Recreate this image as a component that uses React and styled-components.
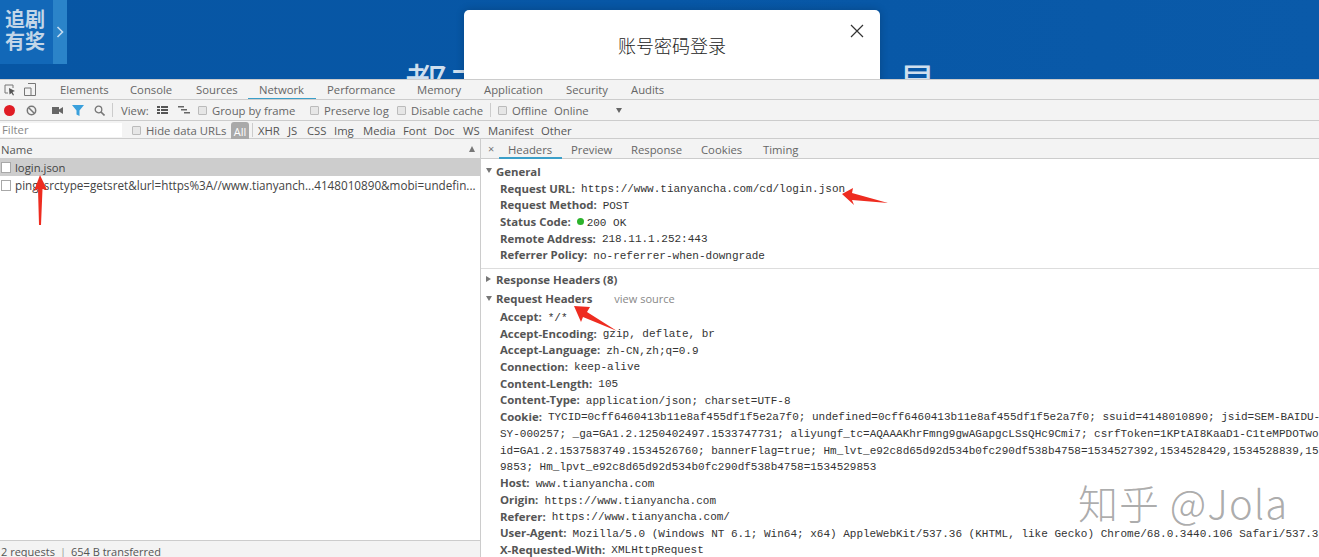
import React from "react";
import styled, { createGlobalStyle } from "styled-components";

const GlobalStyle = createGlobalStyle`
  html, body { margin: 0; padding: 0; overflow: hidden; background: #fff; }
  body { font-family: "Open Sans", "Liberation Sans", "Noto Sans CJK SC", sans-serif; }
  * { box-sizing: border-box; }
`;

const Page = styled.div`
  position: relative;
  width: 1319px;
  height: 557px;
  overflow: hidden;
  display: flex;
  flex-direction: column;
`;

const Hero = styled.div`
  position: relative;
  height: 79px;
  flex: none;
  overflow: hidden;
  background: linear-gradient(90deg, #0756a4, #0757a6 50%, #0a5aa9);
`;

const PromoTab = styled.div`
  position: absolute;
  left: 0;
  top: 0;
  width: 67px;
  height: 64px;
  display: flex;
  background: #1268b8;
`;

const PromoText = styled.div`
  width: 53px;
  padding: 8px 0 0 5px;
  font-family: "Noto Sans CJK SC", sans-serif;
  font-size: 20px;
  font-weight: 700;
  line-height: 22px;
  color: #c3d6e8;
`;

const PromoArrow = styled.div`
  flex: 1;
  display: flex;
  align-items: center;
  justify-content: center;
  background: #2b84c9;
`;

const HeroTitle = styled.div`
  position: absolute;
  left: 405px;
  top: 55px;
  width: 537px;
  display: flex;
  justify-content: space-between;
  font-family: "Noto Sans CJK SC", sans-serif;
  font-size: 42px;
  line-height: 52px;
  letter-spacing: 4px;
  color: #cfdfee;
`;

const Modal = styled.div`
  position: absolute;
  left: 464px;
  top: 10px;
  width: 416px;
  height: 90px;
  padding-top: 22px;
  background: #fff;
  border-radius: 5px;
  box-shadow: 0 0 8px rgba(0, 0, 0, 0.2);
  text-align: center;
  font-family: "Noto Sans CJK SC", sans-serif;
  font-size: 18px;
  font-weight: 300;
  line-height: 26px;
  color: #222;
`;

const CloseIcon = styled.svg`
  position: absolute;
  right: 15px;
  top: 13px;
`;

const Devtools = styled.div`
  flex: 1;
  min-height: 0;
  display: flex;
  flex-direction: column;
  font-size: 11.3px;
  color: #5a5a5a;
`;

const TabBar = styled.div`
  height: 21px;
  flex: none;
  display: flex;
  align-items: stretch;
  background: #f3f3f3;
  border-top: 1px solid #ccc;
  border-bottom: 1px solid #ccc;
`;

const IconSlot = styled.div`
  width: 49px;
  padding-left: 4px;
  display: flex;
  align-items: center;
  gap: 8px;
`;

const MainTab = styled.div`
  width: ${(p) => p.$w}px;
  padding-left: 11px;
  line-height: 20px;
  white-space: nowrap;
  color: #666;
  border-bottom: ${(p) => (p.$active ? "1px solid #3b9fc9" : "none")};
`;

const Toolbar = styled.div`
  height: 21px;
  flex: none;
  display: flex;
  align-items: center;
  background: #f3f3f3;
  border-bottom: 1px solid #ccc;
  white-space: nowrap;
`;

const FilterBar = styled(Toolbar)`
  height: 18px;
  padding-top: 1px;
`;

const Separator = styled.div`
  width: 1px;
  height: 14px;
  margin: ${(p) => p.$margin};
  background: #ccc;
`;

const Dot = styled.span`
  width: 11px;
  height: 11px;
  margin: 0 11px 0 4px;
  border-radius: 50%;
  background: #e01c24;
`;

const ToolIcon = styled.svg`
  flex: none;
  margin-left: ${(p) => p.$left || 0}px;
`;

const CheckItem = styled.span`
  display: inline-flex;
  align-items: center;
  width: ${(p) => (p.$w ? `${p.$w}px` : "auto")};
  margin-left: ${(p) => p.$left || 0}px;
  color: #666;
`;

const Check = styled.span`
  width: 9px;
  height: 9px;
  flex: none;
  margin-right: 5px;
  border: 1px solid #bbb;
  border-radius: 1px;
  background: #e6e6e6;
`;

const Label = styled.span`
  margin-left: ${(p) => p.$left || 0}px;
  width: ${(p) => p.$w}px;
  color: #666;
`;

const FilterInput = styled.div`
  width: 122px;
  height: 14px;
  padding-left: 2px;
  background: #fff;
  line-height: 14px;
  color: #888;
`;

const AllPill = styled.span`
  width: 18px;
  height: 17px;
  margin: 0 3px 0 0;
  background: #a9a9a9;
  border-radius: 3px 3px 0 0;
  color: #fff;
  text-align: center;
  line-height: 19px;
  font-size: 11px;
`;

const FilterType = styled.span`
  width: ${(p) => p.$w}px;
  color: #555;
`;

const Split = styled.div`
  flex: 1;
  min-height: 0;
  display: flex;
`;

const ListPane = styled.div`
  width: 481px;
  flex: none;
  display: flex;
  flex-direction: column;
  border-right: 1px solid #ccc;
`;

const ListHeader = styled.div`
  height: 20px;
  flex: none;
  padding: 1px 5px 0 1px;
  display: flex;
  align-items: center;
  justify-content: space-between;
  background: #f3f3f3;
  border-bottom: 1px solid #ccc;
  color: #555;
`;

const SortUp = styled.span`
  width: 0;
  height: 0;
  border-left: 3.5px solid transparent;
  border-right: 3.5px solid transparent;
  border-bottom: 6px solid #777;
`;

const Rows = styled.div`
  flex: 1;
`;

const RequestRow = styled.div`
  height: ${(p) => (p.$selected ? 17 : 14)}px;
  padding-left: 1px;
  display: flex;
  align-items: center;
  white-space: nowrap;
  overflow: hidden;
  color: #444;
  background: ${(p) => (p.$selected ? "#cdcdcd" : "#fff")};
`;

const PingRow = styled(RequestRow)`
  margin-top: 1px;
  height: 16px;
  font-size: 11.7px;
`;

const RowBox = styled.span`
  width: 10px;
  height: 11px;
  flex: none;
  margin-right: 4px;
  border: 1px solid #a8a8a8;
  background: #fff;
`;

const StatusBar = styled.div`
  height: 17px;
  flex: none;
  padding-left: 1px;
  background: #f3f3f3;
  border-top: 1px solid #ccc;
  font-size: 11px;
  line-height: 21px;
  white-space: nowrap;
  color: #555;
`;

const StatusPipe = styled.span`
  margin: 0 5px;
  color: #999;
`;

const DetailPane = styled.div`
  flex: 1;
  min-width: 0;
  display: flex;
  flex-direction: column;
  overflow: hidden;
`;

const DetailTabs = styled.div`
  height: 20px;
  flex: none;
  padding-left: 7px;
  display: flex;
  align-items: stretch;
  background: #f3f3f3;
  border-bottom: 1px solid #ccc;
`;

const CloseX = styled.span`
  width: 11px;
  font-size: 11px;
  line-height: 20px;
  color: #777;
`;

const DetailTab = styled.div`
  width: ${(p) => p.$w}px;
  height: 20px;
  padding-left: 9px;
  line-height: 22px;
  color: #666;
  white-space: nowrap;
  box-shadow: ${(p) => (p.$active ? "inset 0 -2px 0 #3b9fc9" : "none")};
`;

const Section = styled.div`
  padding: ${(p) => (p.$ruled ? "3px 0 5px" : "0")};
  border-bottom: ${(p) => (p.$ruled ? "1px solid #ddd" : "none")};
`;

const SectionTitle = styled.div`
  height: ${(p) => p.$h || 18}px;
  padding-left: 15px;
  position: relative;
  display: flex;
  align-items: center;
  font-size: 11.4px;
  font-weight: 700;
  color: #555;
  white-space: nowrap;
`;

const Caret = styled.span`
  position: absolute;
  left: 5px;
  top: 50%;
  margin-top: -3px;
  width: 0;
  height: 0;
  ${(p) =>
    p.$open
      ? `border-left: 3px solid transparent; border-right: 3px solid transparent; border-top: 5px solid #777;`
      : `border-top: 3px solid transparent; border-bottom: 3px solid transparent; border-left: 5px solid #777;`}
`;

const ViewSource = styled.span`
  margin-left: 22px;
  font-weight: 400;
  font-size: 11px;
  color: #888;
`;

const Field = styled.div`
  height: 16.65px;
  padding-left: 19px;
  display: flex;
  align-items: center;
  white-space: nowrap;
`;

const FieldName = styled.span`
  font-size: 11.4px;
  font-weight: 700;
  color: #555;
  margin-right: 6px;
`;

const FieldValue = styled.span`
  margin-top: 2px;
  font-family: "Liberation Mono", "DejaVu Sans Mono", monospace;
  font-size: 11px;
  color: #333;
`;

const StatusDot = styled.span`
  width: 7px;
  height: 7px;
  margin-right: 3px;
  border-radius: 50%;
  background: #2cb32c;
`;

const Arrow = styled.svg`
  position: absolute;
  left: ${(p) => p.$x}px;
  top: ${(p) => p.$y}px;
  pointer-events: none;
`;

const Watermark = styled.div`
  position: absolute;
  left: 1078px;
  top: 476px;
  font-family: "Noto Sans CJK SC", "Liberation Sans", sans-serif;
  font-size: 40px;
  font-weight: 300;
  line-height: 52px;
  letter-spacing: 1px;
  white-space: nowrap;
  color: rgba(125, 125, 125, 0.65);
`;

const mainTabs = [
  ["Elements", 70], ["Console", 66], ["Sources", 63], ["Network", 68], ["Performance", 90],
  ["Memory", 67], ["Application", 82], ["Security", 65], ["Audits", 60],
];

const filterTypes = [
  ["XHR", 30], ["JS", 19], ["CSS", 27], ["Img", 29], ["Media", 40], ["Font", 31], ["Doc", 29], ["WS", 25], ["Manifest", 53], ["Other", 40],
];

const detailTabs = [
  ["Headers", 63], ["Preview", 60], ["Response", 70], ["Cookies", 62], ["Timing", 50],
];

const general = [
  ["Request URL:", "https://www.tianyancha.com/cd/login.json"],
  ["Request Method:", "POST"],
  ["Status Code:", "200 OK", true],
  ["Remote Address:", "218.11.1.252:443"],
  ["Referrer Policy:", "no-referrer-when-downgrade"],
];

const before = [
  ["Accept:", "*/*"],
  ["Accept-Encoding:", "gzip, deflate, br"],
  ["Accept-Language:", "zh-CN,zh;q=0.9"],
  ["Connection:", "keep-alive"],
  ["Content-Length:", "105"],
  ["Content-Type:", "application/json; charset=UTF-8"],
  ["Cookie:", "TYCID=0cff6460413b11e8af455df1f5e2a7f0; undefined=0cff6460413b11e8af455df1f5e2a7f0; ssuid=4148010890; jsid=SEM-BAIDU-"],
];

const cookieLines = [
  "SY-000257; _ga=GA1.2.1250402497.1533747731; aliyungf_tc=AQAAAKhrFmng9gwAGapgcLSsQHc9Cmi7; csrfToken=1KPtAI8KaaD1-C1teMPDOTwo",
  "id=GA1.2.1537583749.1534526760; bannerFlag=true; Hm_lvt_e92c8d65d92d534b0fc290df538b4758=1534527392,1534528429,1534528839,153",
  "9853; Hm_lpvt_e92c8d65d92d534b0fc290df538b4758=1534529853",
];

const after = [
  ["Host:", "www.tianyancha.com"],
  ["Origin:", "https://www.tianyancha.com"],
  ["Referer:", "https://www.tianyancha.com/"],
  ["User-Agent:", "Mozilla/5.0 (Windows NT 6.1; Win64; x64) AppleWebKit/537.36 (KHTML, like Gecko) Chrome/68.0.3440.106 Safari/537.36"],
  ["X-Requested-With:", "XMLHttpRequest"],
];

function HeaderField({ name, value, status }) {
  return (
    <Field>
      <FieldName>{name}</FieldName>
      {status && <StatusDot />}
      <FieldValue>{value}</FieldValue>
    </Field>
  );
}

function RedArrow({ x, y, w, h, points }) {
  return (
    <Arrow $x={x} $y={y} width={w} height={h} viewBox={`0 0 ${w} ${h}`}>
      <polygon points={points} fill="#ee2c20" />
    </Arrow>
  );
}

export default function App() {
  return (
    <Page>
      <GlobalStyle />
      <Hero>
        <PromoTab>
          <PromoText>追剧<br />有奖</PromoText>
          <PromoArrow>
            <svg width="8" height="12" viewBox="0 0 8 12">
              <path d="M1.5 1l5 5-5 5" fill="none" stroke="#c4dcf0" strokeWidth="1.6" />
            </svg>
          </PromoArrow>
        </PromoTab>
        <HeroTitle><span>都市</span><span>具</span></HeroTitle>
        <Modal>
          账号密码登录
          <CloseIcon width="16" height="16" viewBox="0 0 16 16">
            <path d="M2 2l12 12M14 2L2 14" stroke="#333" strokeWidth="1.2" />
          </CloseIcon>
        </Modal>
      </Hero>
      <Devtools>
        <TabBar>
          <IconSlot>
            <svg width="12" height="12" viewBox="0 0 12 12">
              <path d="M1 1h8v3M1 1v8h3" fill="none" stroke="#777" />
              <path d="M5 4l6 3-2.500 1L10 11l-1 .6L7.500 9 5.500 10.500z" fill="#555" />
            </svg>
            <svg width="12" height="13" viewBox="0 0 12 13">
              <path d="M4 .5h7.500v12H.5V5H7v7.500" fill="none" stroke="#777" />
            </svg>
          </IconSlot>
          {mainTabs.map(([name, w]) => (
            <MainTab key={name} $w={w} $active={name === "Network"}>{name}</MainTab>
          ))}
        </TabBar>
        <Toolbar>
          <Dot />
          <ToolIcon width="11" height="11" viewBox="0 0 11 11">
            <circle cx="5.500" cy="5.500" r="4.200" fill="none" stroke="#777" strokeWidth="1.500" />
            <path d="M2.500 2.500l6 6" stroke="#777" strokeWidth="1.500" />
          </ToolIcon>
          <ToolIcon $left={15} width="11" height="9" viewBox="0 0 11 9">
            <path d="M0 1h7v7H0zM7 3.500L11 1v7L7 5.500z" fill="#666" />
          </ToolIcon>
          <ToolIcon $left={9} width="12" height="11" viewBox="0 0 12 11">
            <path d="M0 0h12L7.500 5.500V11l-3-1.500v-4z" fill="#3aa0dc" />
          </ToolIcon>
          <ToolIcon $left={10} width="11" height="11" viewBox="0 0 11 11">
            <circle cx="4.500" cy="4.500" r="3.300" fill="none" stroke="#777" strokeWidth="1.300" />
            <path d="M7 7l3.500 3.500" stroke="#777" strokeWidth="1.600" />
          </ToolIcon>
          <Separator $margin="0 8px 0 7px" />
          <Label $w={28}>View:</Label>
          <ToolIcon $left={8} width="11" height="8" viewBox="0 0 11 8">
            <path d="M0 0h3v2H0zM4 0h7v2H4zM0 3h3v2H0zM4 3h7v2H4zM0 6h3v2H0zM4 6h7v2H4z" fill="#555" />
          </ToolIcon>
          <ToolIcon $left={10} width="12" height="8" viewBox="0 0 12 8">
            <path d="M0 0h6v1.500H0zM3 3h6v1.500H3zM6 6h6v1.500H6z" fill="#666" />
          </ToolIcon>
          <CheckItem $left={8} $w={112}><Check />Group by frame</CheckItem>
          <CheckItem $w={87}><Check />Preserve log</CheckItem>
          <CheckItem $w={93}><Check />Disable cache</CheckItem>
          <Separator $margin="0 7px 0 0" />
          <CheckItem $w={56}><Check />Offline</CheckItem>
          <Label $w={62}>Online</Label>
          <ToolIcon width="6" height="5" viewBox="0 0 6 5">
            <path d="M0 0h6L3 5z" fill="#666" />
          </ToolIcon>
        </Toolbar>
        <FilterBar>
          <FilterInput>Filter</FilterInput>
          <CheckItem $left={10} $w={99}><Check />Hide data URLs</CheckItem>
          <AllPill>All</AllPill>
          <Separator $margin="0 5px 0 0" />
          {filterTypes.map(([name, w]) => (
            <FilterType key={name} $w={w}>{name}</FilterType>
          ))}
        </FilterBar>
        <Split>
          <ListPane>
            <ListHeader>Name<SortUp /></ListHeader>
            <Rows>
              <RequestRow $selected><RowBox />login.json</RequestRow>
              <PingRow><RowBox />ping?srctype=getsret&amp;lurl=https%3A//www.tianyanch...4148010890&amp;mobi=undefin...</PingRow>
            </Rows>
            <StatusBar>2 requests<StatusPipe>|</StatusPipe>654 B transferred</StatusBar>
          </ListPane>
          <DetailPane>
            <DetailTabs>
              <CloseX>×</CloseX>
              {detailTabs.map(([name, w]) => (
                <DetailTab key={name} $w={w} $active={name === "Headers"}>{name}</DetailTab>
              ))}
            </DetailTabs>
            <Section $ruled>
              <SectionTitle><Caret $open />General</SectionTitle>
              {general.map(([n, v, s]) => <HeaderField key={n} name={n} value={v} status={s} />)}
            </Section>
            <Section>
              <SectionTitle $h={20}><Caret />Response Headers (8)</SectionTitle>
              <SectionTitle $h={19}><Caret $open />Request Headers<ViewSource>view source</ViewSource></SectionTitle>
              {before.map(([n, v]) => <HeaderField key={n} name={n} value={v} />)}
              {cookieLines.map((line) => (
                <Field key={line}><FieldValue>{line}</FieldValue></Field>
              ))}
              {after.map(([n, v]) => <HeaderField key={n} name={n} value={v} />)}
            </Section>
          </DetailPane>
        </Split>
      </Devtools>
      <RedArrow x={34} y={175} w={14} h={50} points="6,0 13,15 8.500,14 7,50 5,50 4,14 0,16" />
      <RedArrow x={842} y={188} w={47} h={18} points="0,6 11,0 10,5 46,15 10,12 12,17" />
      <RedArrow x={574} y={306} w={44} h={26} points="0,0 16,1 13,6 43,25 9,11 7,16" />
      <Watermark>知乎 @Jola</Watermark>
    </Page>
  );
}
